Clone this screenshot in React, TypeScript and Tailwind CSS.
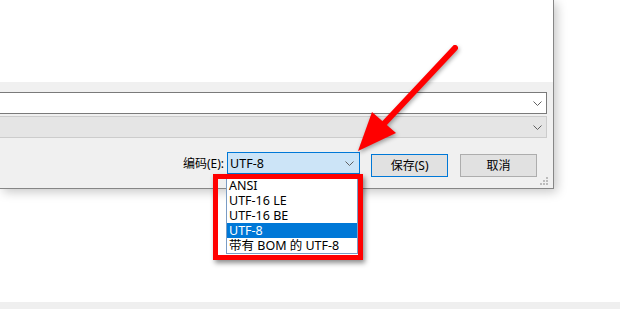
import React from "react";

const Chevron = ({ className = "" }: { className?: string }) => (
  <svg width="9" height="5" viewBox="0 0 9 5" className={className}>
    <path d="M0.5 0.5 L4.5 4.5 L8.5 0.5" fill="none" stroke="#606060" strokeWidth="1" />
  </svg>
);

const items = ["ANSI", "UTF-16 LE", "UTF-16 BE", "UTF-8", "带有 BOM 的 UTF-8"];

export default function App() {
  return (
    <div
      className="relative w-[620px] h-[309px] bg-white overflow-hidden text-[12px] text-black"
      style={{ fontFamily: '"Noto Sans", "Noto Sans CJK SC", sans-serif' }}
    >
      <div className="flex flex-col h-full">
        <div className="flex">
          <div className="w-[554px] h-[189px] flex flex-col border-r border-b border-[#868686] shadow-[3px_3px_10px_rgba(0,0,0,0.22)]">
            <div className="h-[83px] bg-white" />
            <div className="flex-1 bg-[#f0f0f0] flex flex-col pt-[10px] pr-[6px]">
              <div className="h-[22px] bg-white border border-[#7a7a7a] border-l-0 flex items-center justify-end pr-[4px]">
                <Chevron />
              </div>
              <div className="h-[22px] mt-[2px] bg-[#e5e5e5] border border-[#cccccc] border-l-0 flex items-center justify-end pr-[4px]">
                <Chevron />
              </div>
              <div className="flex items-start mt-[14px] relative">
                <div className="flex items-center h-[22px] ml-[183px] mr-[3px] leading-[15px]">编码(E):</div>
                <div className="w-[133px] h-[22px] bg-[#cce4f7] border border-[#0078d7] flex items-center justify-between pl-[2px] pr-[5px] leading-[15px]">
                  <span className="text-[12.5px]">UTF-8</span>
                  <Chevron />
                </div>
                <div className="ml-[11px] mt-[2px] w-[77px] h-[23px] bg-[#e1e1e1] border border-[#0078d7] flex items-center justify-center leading-[15px]">
                  <span>保存(S)</span>
                </div>
                <div className="ml-[12px] mt-[2px] w-[77px] h-[23px] bg-[#e1e1e1] border border-[#adadad] flex items-center justify-center leading-[15px]">
                  取消
                </div>
              </div>
              <div className="flex-1 flex items-end justify-end pb-[2px]">
                <svg width="9" height="9" viewBox="0 0 9 9" className="-mr-[2px]">
                  <rect x="6" y="0" width="2" height="2" fill="#bcbcbc" />
                  <rect x="3" y="3" width="2" height="2" fill="#bcbcbc" />
                  <rect x="6" y="3" width="2" height="2" fill="#bcbcbc" />
                  <rect x="0" y="6" width="2" height="2" fill="#bcbcbc" />
                  <rect x="3" y="6" width="2" height="2" fill="#bcbcbc" />
                  <rect x="6" y="6" width="2" height="2" fill="#bcbcbc" />
                </svg>
              </div>
            </div>
          </div>
        </div>
        <div className="flex-1" />
        <div className="h-[7px] bg-[#efefef]" />
      </div>

      {/* dropdown list */}
      <div className="absolute left-[226px] top-[175px] w-[132px] h-[79px] bg-white border border-[#7a9cc4] flex flex-col pt-[2px]">
        {items.map((t, i) => (
          <div
            key={t}
            className={
              i === 3
                ? "h-[15px] leading-[15px] overflow-hidden flex items-center pl-[2px] bg-[#0078d7] text-white text-[12.5px]"
                : "h-[15px] leading-[15px] overflow-hidden flex items-center pl-[2px] text-[12.5px]"
            }
          >
            {t}
          </div>
        ))}
      </div>

      {/* red annotation box */}
      <div className="absolute left-[213px] top-[174px] w-[150px] h-[86px] border-[5px] border-[#ff0000] shadow-[2px_3px_5px_rgba(0,0,0,0.45)]" />

      {/* red arrow */}
      <svg
        className="absolute left-0 top-0"
        width="620"
        height="309"
        viewBox="0 0 620 309"
        style={{ filter: "drop-shadow(1px 2px 2px rgba(0,0,0,0.35))" }}
      >
        <line x1="455" y1="48" x2="380" y2="128" stroke="#ff0000" strokeWidth="6" strokeLinecap="round" />
        <polygon points="358,151 372,112 396,133" fill="#ff0000" />
      </svg>
    </div>
  );
}
